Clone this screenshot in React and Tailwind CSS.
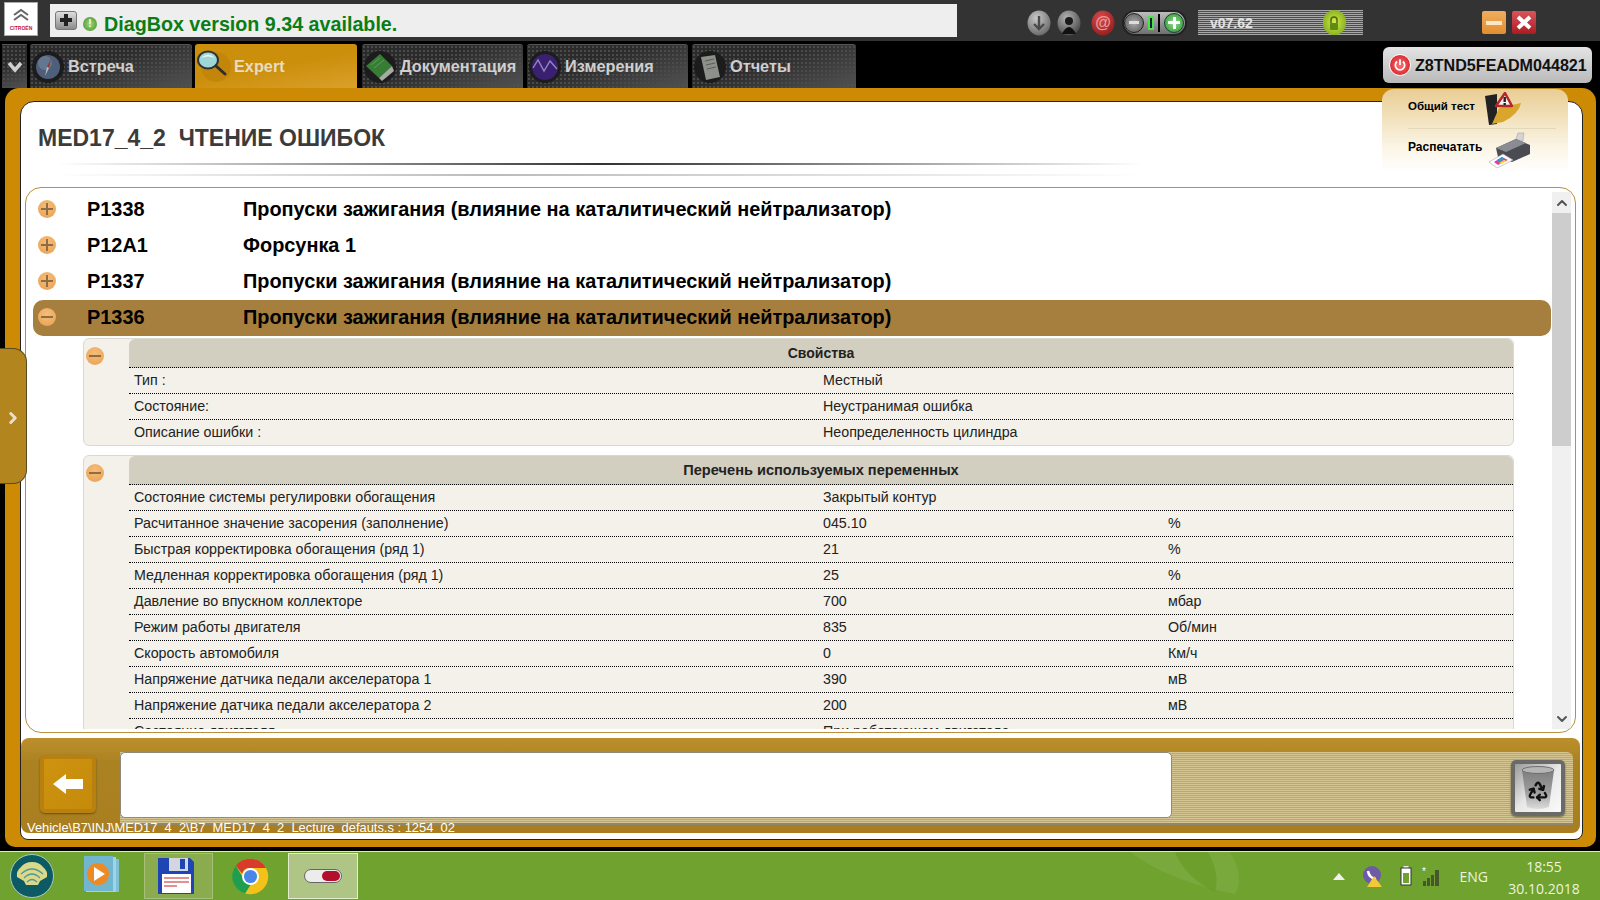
import React from 'react';
import { Recycle, ChevronUp, ChevronDown, ChevronRight } from 'lucide-react';

const CompassIcon = () => (
  <svg width="34" height="34" viewBox="0 0 34 34">
    <circle cx="17" cy="17" r="16" fill="#1c1c1c" />
    <circle cx="17" cy="17" r="12" fill="#4d5f7a" />
    <circle cx="14" cy="13" r="7" fill="#74879f" opacity=".6" />
    <path d="M20 8 L18 18 L16 17 Z" fill="#a23526" />
    <path d="M16 17 L18 18 L14 26 Z" fill="#b8bec6" />
  </svg>
);
const LensIcon = () => (
  <svg width="42" height="34" viewBox="0 0 42 34">
    <circle cx="22" cy="18" r="15" fill="#c4860a" />
    <ellipse cx="14" cy="11" rx="10" ry="8.5" fill="#9fd7d8" stroke="#333" strokeWidth="2" />
    <path d="M7 9 Q14 2 21 9 Q14 6 7 9Z" fill="#e7f5f0" />
    <path d="M22 17 L31 25" stroke="#2d2d2d" strokeWidth="3" strokeLinecap="round" />
  </svg>
);
const BookIcon = () => (
  <svg width="34" height="34" viewBox="0 0 34 34">
    <circle cx="17" cy="17" r="16" fill="#1c1c1c" />
    <path d="M3 16 L17 4 L29 16 L16 28 Z" fill="#377d35" />
    <path d="M16 28 L29 16 L31 21 L19 31 Z" fill="#a7aba3" />
    <path d="M8 15 L17 8 M11 18 L21 10" stroke="#5e9a58" strokeWidth="1" />
  </svg>
);
const WaveIcon = () => (
  <svg width="34" height="34" viewBox="0 0 34 34">
    <circle cx="17" cy="17" r="16" fill="#1c1c1c" />
    <circle cx="17" cy="17" r="13" fill="#3a2070" />
    <path d="M5 18 L10 10 L16 21 L22 11 L29 19" fill="none" stroke="#9485c4" strokeWidth="1.4" />
  </svg>
);
const PaperIcon = () => (
  <svg width="34" height="34" viewBox="0 0 34 34">
    <circle cx="17" cy="17" r="16" fill="#1c1c1c" />
    <path d="M8 7 L22 5 L27 27 L13 30 Z" fill="#8e918a" />
    <path d="M12 11 L21 9 M13 15 L22 13 M14 19 L23 17" stroke="#5c5e58" strokeWidth="1.2" />
  </svg>
);

const Logo = () => (
  <div className="w-[34px] h-[34px] mb-[3px] bg-white border border-[#aaa] flex flex-col items-center justify-center ml-[4px]">
    <svg width="18" height="17" viewBox="0 0 18 17">
      <path d="M2 7 L9 2 L16 7 M2 12 L9 7 L16 12" fill="none" stroke="#666" strokeWidth="2" />
    </svg>
    <span className="text-[5px] leading-[6px] font-bold text-[#c8102e]">CITROËN</span>
  </div>
);

const CircleBtn = ({ from, to, children }) => (
  <svg width="24" height="26" viewBox="0 0 24 26">
    <defs>
      <radialGradient id={`g${from.slice(1)}`} cx=".4" cy=".3" r=".8">
        <stop offset="0" stopColor={from} />
        <stop offset="1" stopColor={to} />
      </radialGradient>
    </defs>
    <ellipse cx="12" cy="13" rx="11.5" ry="12.5" fill={`url(#g${from.slice(1)})`} />
    {children}
  </svg>
);

const TopBar = () => (
  <div className="h-[41px] bg-[#333333] flex items-center shrink-0">
    <Logo />
    <div className="ml-[12px] mb-[1px] w-[907px] h-[33px] bg-[#eeeeee] flex items-center">
      <div className="ml-[5px] w-[22px] h-[19px] rounded-[3px] border border-[#777] bg-[linear-gradient(#dedede,#8b8b8b)] flex items-center justify-center">
        <span className="block relative w-[12px] h-[12px]">
          <span className="absolute left-0 top-[4px] w-[12px] h-[4px] bg-[#222]" />
          <span className="absolute left-[4px] top-0 w-[4px] h-[12px] bg-[#222]" />
        </span>
      </div>
      <div className="ml-[6px] mt-[8px] w-[14px] h-[14px] rounded-full bg-[radial-gradient(#9fd97f,#3d8f22)] flex items-center justify-center text-white text-[10px] font-bold leading-none">!</div>
      <span className="ml-[7px] mt-[9px] text-[19.7px] font-bold text-[#0a7d14] leading-none">DiagBox version 9.34 available.</span>
    </div>
    <div className="ml-[70px] mt-[4px] flex items-center">
      <CircleBtn from="#c9c9c9" to="#5e5e5e">
        <path d="M12 6 V19 M7 14 L12 19 L17 14" fill="none" stroke="#4a4a4a" strokeWidth="2.4" />
      </CircleBtn>
      <div className="ml-[6px]">
        <CircleBtn from="#b4b4b4" to="#3f3f3f">
          <circle cx="12" cy="11" r="4" fill="#1a1a1a" />
          <path d="M5 24 Q12 10 19 24 Z" fill="#111" />
        </CircleBtn>
      </div>
      <div className="ml-[10px]">
        <CircleBtn from="#d94a4a" to="#8d1b1b">
          <text x="12" y="18" textAnchor="middle" fontSize="16" fontWeight="700" fill="#e89a9a" fontFamily="Liberation Sans">@</text>
        </CircleBtn>
      </div>
      <div className="ml-[7px] w-[65px] h-[26px] rounded-full bg-[linear-gradient(#bdbdbd,#6f6f6f)] border-2 border-[#222] flex items-center relative">
        <span className="w-[20px] h-[20px] rounded-full bg-[radial-gradient(#aaa,#555)] border border-[#222] flex items-center justify-center">
          <span className="w-[10px] h-[3px] bg-[#ddd]" />
        </span>
        <span className="ml-[4px] w-[6px] h-[14px] border-2 border-[#4fe04f] bg-[#123]" />
        <span className="ml-[4px] w-[2px] h-[18px] bg-black" />
        <span className="ml-[4px] w-[20px] h-[20px] rounded-full bg-[radial-gradient(#8fe08f,#2f8f2f)] border border-[#143] flex items-center justify-center relative">
          <span className="absolute w-[12px] h-[3px] bg-white" />
          <span className="absolute w-[3px] h-[12px] bg-white" />
        </span>
      </div>
      <div className="ml-[11px] w-[165px] h-[25px] bg-[repeating-linear-gradient(180deg,#a8a8a8_0px,#a8a8a8_1px,#4c4c4c_1px,#4c4c4c_2px)] flex items-center">
        <span className="ml-[12px] text-[14px] font-bold text-[#e2e2e2] leading-none">v07.62</span>
        <span className="ml-[70px] w-[23px] h-[25px] rounded-full bg-[radial-gradient(#d4ec4a,#6d9c12)] flex items-center justify-center">
          <svg width="10" height="16" viewBox="0 0 10 16"><path d="M2 8 V5 a3 3 0 0 1 6 0 V8" fill="none" stroke="#4a6a10" strokeWidth="1.5" /><rect x="1" y="8" width="8" height="7" rx="1" fill="#5f8a14" /></svg>
        </span>
      </div>
      <div className="ml-[119px] w-[24px] h-[23px] rounded-[2px] bg-[linear-gradient(#efad5e,#e38e2f)] flex items-center justify-center">
        <span className="w-[16px] h-[4px] bg-[#fde6c7]" />
      </div>
      <div className="ml-[6px] w-[24px] h-[23px] rounded-[2px] bg-[linear-gradient(#d9555a,#aa1c22)] flex items-center justify-center">
        <svg width="16" height="15" viewBox="0 0 16 15"><path d="M2 2 L14 13 M14 2 L2 13" stroke="white" strokeWidth="4" /></svg>
      </div>
    </div>
  </div>
);

const darkTab = 'bg-[radial-gradient(#4b4b4b_1px,transparent_1.2px),linear-gradient(160deg,#2b2b2b_40%,#525252_100%)] bg-[length:4px_4px,100%_100%] border-t border-[#555]';

const Tab = ({ icon, label, className, textClass = 'text-[#cfcfcf] ml-[3px]', gap = 'ml-[1px]' }) => (
  <div className={`h-[44px] flex items-center rounded-t-[3px] ${className}`}>
    <span className={`flex items-center justify-center ${gap}`}>{icon}</span>
    <span className={`text-[16.3px] font-bold leading-none ${textClass}`}>{label}</span>
  </div>
);

const NavBar = () => (
  <div className="h-[47px] bg-black flex items-end shrink-0 relative">
    <div className={`ml-[2px] w-[25px] h-[44px] flex items-center justify-center ${darkTab}`}>
      <svg width="16" height="14" viewBox="0 0 16 14"><path d="M2 3 L8 10 L14 3" fill="none" stroke="#cfcfcf" strokeWidth="3.5" /></svg>
    </div>
    <Tab icon={<CompassIcon />} label="Встреча" className={`ml-[3px] w-[162px] ${darkTab}`} />
    <Tab icon={<LensIcon />} label="Expert" gap="-ml-[1px]" className="ml-[3px] w-[162px] bg-[linear-gradient(170deg,#cc8f0c_50%,#d9a02a_100%)]" textClass="text-[#e8dcc2] -ml-[2px]" />
    <Tab icon={<BookIcon />} label="Документация" className={`ml-[5px] w-[161px] ${darkTab}`} />
    <Tab icon={<WaveIcon />} label="Измерения" className={`ml-[4px] w-[161px] ${darkTab}`} />
    <Tab icon={<PaperIcon />} label="Отчеты" className={`ml-[4px] w-[164px] ${darkTab}`} />
    <div className="ml-auto mr-[8px] mb-[5px] w-[209px] h-[36px] rounded-[6px] bg-[linear-gradient(#e4e4e4,#b9b9b9)] flex items-center">
      <span className="ml-[6px] w-[22px] h-[22px] rounded-full bg-[radial-gradient(#ff6f6f,#c8141c)] border border-white flex items-center justify-center">
        <svg width="14" height="14" viewBox="0 0 12 12"><path d="M3.5 3 A4 4 0 1 0 8.5 3 M6 1 V6" fill="none" stroke="white" strokeWidth="1.5" /></svg>
      </span>
      <span className="ml-[4px] text-[16.1px] font-bold text-[#111] leading-none">Z8TND5FEADM044821</span>
    </div>
  </div>
);

const FolderIcon = () => (
  <svg width="40" height="34" viewBox="0 0 40 34">
    <path d="M2 4 L14 2 L14 32 L6 33 Z" fill="#222" />
    <path d="M9 32 L16 16 L38 11 Q36 22 20 30 Z" fill="#d9a52c" />
    <path d="M13 14 L22 1 L29 14 Z" fill="#f6f0ea" stroke="#b3272b" strokeWidth="2.5" strokeLinejoin="round" />
    <rect x="20.5" y="5" width="2.4" height="5" fill="#222" />
    <rect x="20.5" y="11" width="2.4" height="2" fill="#222" />
  </svg>
);
const PrinterIcon = () => (
  <svg width="44" height="36" viewBox="0 0 44 36">
    <path d="M27 10 L30 1 L36 1 L35 9 Z" fill="#d4d4d4" stroke="#999" strokeWidth=".5" />
    <path d="M8 16 L28 7 L42 13 L42 22 L24 30 L10 25 Z" fill="#4b4c52" />
    <path d="M8 16 L28 7 L38 11 L18 20 Z" fill="#8b8c93" />
    <path d="M1 30 L15 22 L25 28 L9 36 Z" fill="#fff" stroke="#aaa" strokeWidth=".6" />
    <path d="M6 30 L14 25 L20 28 L10 33 Z" fill="#e33ba0" />
    <path d="M9 28 L14 25 L17 27 L11 30 Z" fill="#39c" />
    <path d="M11 31 L16 28 L19 29 L13 32 Z" fill="#ed3" />
  </svg>
);

const SideMenu = () => (
  <div className="absolute right-[28px] top-0 w-[186px] h-[84px] z-10 rounded-t-[12px] bg-[linear-gradient(#e9cd93,#fbf5e6_70%,#ffffff)] border-t border-[#b7862a] pl-[26px]">
    <div className="h-[40px] w-[148px] flex items-center border-b border-[#e4d8bc]">
      <span className="w-[75px] shrink-0 mb-[3px] text-[11.5px] font-bold text-black">Общий тест</span>
      <FolderIcon />
    </div>
    <div className="h-[39px] flex items-center">
      <span className="w-[80px] shrink-0 mb-[3px] text-[12px] font-bold text-black">Распечатать</span>
      <span className="mt-[3px]"><PrinterIcon /></span>
    </div>
  </div>
);

const Ball = ({ type, cls = 'bg-[radial-gradient(circle_at_50%_35%,#f7bd7a,#e8a050)]' }) => (
  <span className={`relative block w-[18px] h-[18px] rounded-full ${cls} shrink-0`}>
    <span className="absolute left-[3px] top-[8px] w-[12px] h-[2px] bg-[#8d6d45]" />
    {type === 'plus' && <span className="absolute left-[8px] top-[3px] w-[2px] h-[12px] bg-[#8d6d45]" />}
  </span>
);

const FaultRow = ({ code, text, open }) => (
  <div className={`h-[36px] flex items-center rounded-[10px] ${open ? 'bg-[#a67f3f]' : ''}`}>
    <span className="ml-[5px] mb-[2px]"><Ball type={open ? 'minus' : 'plus'} /></span>
    <span className="ml-[31px] w-[156px] text-[19.9px] font-bold text-black leading-none">{code}</span>
    <span className="text-[19.9px] font-bold text-black leading-none">{text}</span>
  </div>
);

const DataRow = ({ a, b, c }) => (
  <div className="h-[26px] flex items-center border-b border-dotted border-black text-[14.25px] text-[#222] last:border-b-0 last:h-[25px]">
    <span className="ml-[5px] w-[689px] shrink-0">{a}</span>
    <span className="w-[345px] shrink-0">{b}</span>
    <span>{c}</span>
  </div>
);

const Section = ({ title, rows, className = '', titleClass = 'text-[14px]' }) => (
  <div className={`ml-[50px] w-[1431px] bg-[#f3f1ea] border border-[#dbd8ce] rounded-[6px] flex ${className}`}>
    <div className="w-[45px] shrink-0 pl-[2px] pt-[8px]"><Ball type="minus" /></div>
    <div className="flex-1">
      <div className={`h-[29px] bg-[#d2cfc1] rounded-t-[6px] border-b border-dotted border-black flex items-center justify-center font-bold text-[#222] ${titleClass}`}>{title}</div>
      {rows.map((r, i) => <DataRow key={i} a={r[0]} b={r[1]} c={r[2]} />)}
    </div>
  </div>
);

const ListBox = () => (
  <div className="ml-[4px] mr-[6px] h-[546px] border-[1.5px] border-[#b8903e] rounded-[16px] flex overflow-hidden shrink-0">
    <div className="flex-1 overflow-hidden pt-[4px] pl-[7px] mb-[3px]">
      <FaultRow code="P1338" text="Пропуски зажигания (влияние на каталитический нейтрализатор)" />
      <FaultRow code="P12A1" text="Форсунка 1" />
      <FaultRow code="P1337" text="Пропуски зажигания (влияние на каталитический нейтрализатор)" />
      <FaultRow code="P1336" text="Пропуски зажигания (влияние на каталитический нейтрализатор)" open />
      <Section className="mt-[2px]" title="Свойства" rows={[
        ['Тип :', 'Местный', ''],
        ['Состояние:', 'Неустранимая ошибка', ''],
        ['Описание ошибки :', 'Неопределенность цилиндра', ''],
      ]} />
      <Section className="mt-[9px]" titleClass="text-[14.6px] pt-[2px]" title="Перечень используемых переменных" rows={[
        ['Состояние системы регулировки обогащения', 'Закрытый контур', ''],
        ['Расчитанное значение засорения (заполнение)', '045.10', '%'],
        ['Быстрая корректировка обогащения (ряд 1)', '21', '%'],
        ['Медленная корректировка обогащения (ряд 1)', '25', '%'],
        ['Давление во впускном коллекторе', '700', 'мбар'],
        ['Режим работы двигателя', '835', 'Об/мин'],
        ['Скорость автомобиля', '0', 'Км/ч'],
        ['Напряжение датчика педали акселератора 1', '390', 'мВ'],
        ['Напряжение датчика педали акселератора 2', '200', 'мВ'],
        ['Состояние двигателя', 'При работающем двигателе', ''],
      ]} />
    </div>
    <div className="w-[19px] mr-[4px] ml-[1px] mt-[4px] mb-[3px] bg-[#f0f0f0] flex flex-col shrink-0">
      <div className="h-[21px] flex items-center justify-center"><ChevronUp size={16} strokeWidth={3} color="#555" /></div>
      <div className="h-[233px] bg-[#cdcdcd]" />
      <div className="flex-1" />
      <div className="h-[21px] flex items-center justify-center"><ChevronDown size={16} strokeWidth={3} color="#555" /></div>
    </div>
  </div>
);

const TrashIcon = () => (
  <svg width="40" height="46" viewBox="0 0 40 46">
    <defs>
      <linearGradient id="bucket" x1="0" y1="0" x2="0" y2="1">
        <stop offset="0" stopColor="#7d7d7d" />
        <stop offset=".55" stopColor="#9c9c9c" />
        <stop offset="1" stopColor="#dcdcdc" />
      </linearGradient>
    </defs>
    <path d="M4 5 L36 5 L31 42 Q20 46 9 42 Z" fill="url(#bucket)" />
    <ellipse cx="20" cy="5" rx="16" ry="3.5" fill="#b5b5b5" stroke="#6e6e6e" />
    <Recycle x="9" y="15" width="22" height="22" color="#111" strokeWidth={2.6} />
  </svg>
);

const BottomPanel = () => (
  <div className="relative mt-[5px] mr-[2px] h-[95px] rounded-[8px] bg-[linear-gradient(#bd8f2c,#ab8222_25%,#a97e20)] pt-[14px] shrink-0">
    <div className="flex h-[73px]">
      <div className="ml-[19px] mt-[3px] w-[56px] h-[58px] rounded-[5px] border-[4px] border-[#b8810f] bg-[linear-gradient(135deg,#cf9310,#c48a0a)] flex items-center justify-center shadow-[0_1px_2px_rgba(0,0,0,0.4)]">
        <svg width="32" height="22" viewBox="0 0 32 22"><path d="M1 11 L14 1 V6 H31 V16 H14 V21 Z" fill="white" /></svg>
      </div>
      <div className="ml-[24px] mr-[7px] flex-1 flex rounded-tr-[6px] bg-[repeating-linear-gradient(180deg,#d4c592_0px,#d4c592_1px,#b7a970_1px,#b7a970_2px)] border-b-2 border-[#8f8570]">
        <div className="w-[1052px] h-[66px] bg-white border border-[#8f8a7a] rounded-[5px] shrink-0" />
        <div className="ml-auto mr-[8px] mt-[8px] w-[54px] h-[56px] rounded-[5px] border-[4px] border-[#6a6a66] bg-[linear-gradient(135deg,#9a9a9a,#e8e8e8_50%,#fafafa)] flex items-center justify-center shadow-[0_1px_2px_rgba(0,0,0,0.5)]">
          <TrashIcon />
        </div>
      </div>
    </div>
    <span className="absolute left-[6px] top-[82px] h-[13px] overflow-hidden text-[12.9px] leading-[15px] text-white whitespace-pre">{'Vehicle\\B7\\INJ\\MED17_4_2\\B7_MED17_4_2_Lecture_defauts.s : 1254_02'}</span>
  </div>
);

const Main = () => (
  <div className="relative ml-[5px] mr-[4px] h-[759px] bg-[#cc8a05] rounded-t-[14px] rounded-b-[10px] pl-[15px] pr-[13px] pt-[13px] pb-[7px] shrink-0">
    <div className="relative h-full bg-white border border-[#222] rounded-t-[14px] rounded-b-[8px] flex flex-col">
      <div className="h-[85px] shrink-0 pl-[17px] pt-[21px]">
        <div className="text-[23px] leading-[30px] font-bold text-[#3b3b3b] whitespace-pre">MED17_4_2  ЧТЕНИЕ ОШИБОК</div>
        <div className="mt-[10px] ml-[19px] w-[1086px] h-[2px] bg-[linear-gradient(90deg,transparent,#333_50%,#555_60%,transparent)]" />
        <div className="mt-[9px] ml-[19px] w-[1086px] h-[2px] bg-[linear-gradient(90deg,transparent,#bbb_40%,transparent)]" />
      </div>
      <ListBox />
      <BottomPanel />
    </div>
    <SideMenu />
    <div className="absolute left-[-5px] top-[260px] w-[27px] h-[136px] bg-[#b2851f] border border-[#5a4a20] border-l-0 rounded-r-[14px] flex items-center justify-center z-10">
      <ChevronRight size={18} strokeWidth={4} color="#e8e0c8" className="mt-[4px]" />
    </div>
  </div>
);

const ShellOrb = () => (
  <svg width="44" height="44" viewBox="0 0 44 44">
    <circle cx="22" cy="22" r="21.5" fill="#0c5a63" stroke="#a9c9c6" />
    <path d="M22 8 Q29 8 33 13 Q38 17 37 23 L30 27 L28 31 H16 L14 27 L7 23 Q6 17 11 13 Q15 8 22 8 Z" fill="#dad98a" />
    <path d="M17 28 Q22 23 27 28 M14 24 Q22 16 30 24 M11 20 Q22 10 33 20" fill="none" stroke="#4d969a" strokeWidth="1.3" />
  </svg>
);
const PlayerIcon = () => (
  <svg width="36" height="40" viewBox="0 0 36 40">
    <rect x="6" y="3" width="30" height="33" fill="#7ec0d6" />
    <rect x="3" y="1" width="30" height="35" fill="#9ed4e6" />
    <rect x="1" y="0" width="29" height="35" fill="#72b5cf" />
    <circle cx="15" cy="18" r="11" fill="#ed8a23" />
    <path d="M11 11 L22 18 L11 25 Z" fill="white" />
  </svg>
);
const FloppyIcon = () => (
  <svg width="38" height="38" viewBox="0 0 38 38">
    <path d="M1 1 H33 L37 5 V37 H1 Z" fill="#1f45b5" />
    <rect x="12" y="1" width="19" height="13" fill="#d2d6de" />
    <rect x="23" y="2" width="5" height="10" fill="#1f45b5" />
    <rect x="5" y="17" width="29" height="19" fill="white" />
    <path d="M7 21 H32 M7 25 H32 M7 29 H20" stroke="#c42020" strokeWidth="1" />
  </svg>
);
const ChromeIcon = () => (
  <svg width="37" height="37" viewBox="0 0 48 48">
    <circle cx="24" cy="24" r="23" fill="#f2c21a" />
    <path d="M24 1 A23 23 0 0 1 44 13 L24 13 A11 11 0 0 0 13 20 L5 10 A23 23 0 0 1 24 1 Z" fill="#d93a2b" />
    <path d="M5 10 L14 25 A11 11 0 0 0 24 35 L17 46 A23 23 0 0 1 5 10 Z" fill="#1e9e50" />
    <circle cx="24" cy="24" r="11" fill="white" />
    <circle cx="24" cy="24" r="8.5" fill="#4a86e8" />
  </svg>
);
const Toggle = () => (
  <div className="relative w-[38px] h-[14px] rounded-full bg-[#ececec] border border-[#666]">
    <span className="absolute right-[1px] top-[1px] w-[18px] h-[10px] rounded-full bg-[#b30e2c]" />
  </div>
);

const TaskBar = () => (
  <div className="relative flex-1 border-t border-[#dfe8cf] bg-[#6fa22e] flex items-center overflow-hidden">
    <svg className="absolute left-[1130px] top-0" width="130" height="49" viewBox="0 0 130 49">
      <path d="M0 0 H100 Q115 25 105 42 Q40 30 0 0 Z" fill="#85af50" opacity=".45" />
      <path d="M45 0 H78 Q90 22 85 40 Q55 25 45 0 Z" fill="#699c28" opacity=".8" />
    </svg>
    <span className="relative ml-[10px]"><ShellOrb /></span>
    <span className="relative ml-[29px]"><PlayerIcon /></span>
    <div className="relative ml-[25px] w-[69px] h-[46px] bg-[#8aab4e] border border-[#a6c07a] flex items-center justify-center"><span className="mr-[5px]"><FloppyIcon /></span></div>
    <span className="relative ml-[19px]"><ChromeIcon /></span>
    <div className="relative ml-[19px] w-[70px] h-[46px] bg-[#aec585] border border-[#e3ecd1] flex items-center justify-center"><Toggle /></div>
    <div className="relative ml-auto flex items-center font-['Open_Sans',sans-serif] text-[#eef4df]">
      <svg width="12" height="7" viewBox="0 0 12 7"><path d="M6 0 L12 7 H0 Z" fill="#f0f0f0" /></svg>
      <svg className="ml-[17px]" width="20" height="22" viewBox="0 0 20 22">
        <circle cx="10" cy="10" r="9" fill="#6d5ba8" />
        <path d="M6 6 Q7 13 14 14" stroke="white" strokeWidth="2.5" fill="none" />
        <path d="M12 11 L20 22 H5 Z" fill="#f2c936" />
      </svg>
      <svg className="ml-[18px]" width="12" height="20" viewBox="0 0 12 20">
        <rect x="3.5" y="0" width="5" height="2" fill="#eee" />
        <rect x="1" y="2" width="10" height="17" fill="#fff" stroke="#333" />
        <rect x="3" y="7" width="6" height="10" fill="#6fa22e" />
      </svg>
      <svg className="ml-[10px]" width="18" height="19" viewBox="0 0 18 19">
        <path d="M1 14 H4 V19 H1Z M5 11 H8 V19 H5Z M9 8 H12 V19 H9Z M13 3 H17 V19 H13Z" fill="#46572e" />
        <text x="0" y="8" fontSize="10" fill="white" fontFamily="Liberation Sans">*</text>
      </svg>
      <span className="ml-[20px] text-[14px]">ENG</span>
      <div className="ml-[21px] mr-[21px] mt-[3px] w-[70px] flex flex-col items-center text-[14px] leading-[22px]">
        <span>18:55</span>
        <span>30.10.2018</span>
      </div>
    </div>
  </div>
);

export default function App() {
  return (
    <div className="w-[1600px] h-[900px] bg-black flex flex-col overflow-hidden font-['Liberation_Sans',Arial,sans-serif]">
      <TopBar />
      <NavBar />
      <Main />
      <div className="h-[4px] shrink-0" />
      <TaskBar />
    </div>
  );
}
